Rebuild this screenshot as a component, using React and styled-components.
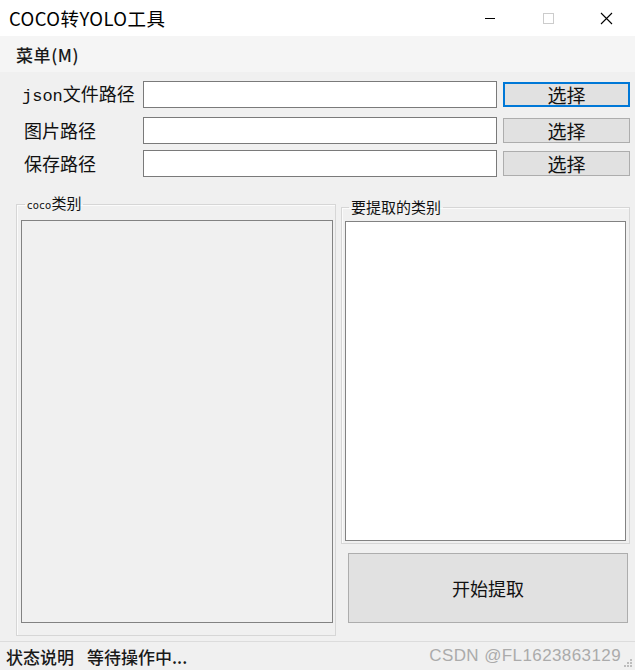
import styled, { createGlobalStyle } from 'styled-components';

const GlobalStyle = createGlobalStyle`
  html, body {
    margin: 0;
    padding: 0;
    background: #f0f0f0;
  }
  * {
    box-sizing: border-box;
  }
`;

const FONT = '"Noto Sans CJK SC", "Noto Sans", sans-serif';

function App() {
  return (
    <Window>
      <GlobalStyle />
      <TitleBar>
        <Title>COCO转YOLO工具</Title>
        <Controls>
          <ControlButton aria-label="minimize">
            <svg width="12" height="12" viewBox="0 0 12 12">
              <line x1="1" y1="6.5" x2="11" y2="6.5" stroke="#000" strokeWidth="1" />
            </svg>
          </ControlButton>
          <ControlButton aria-label="maximize">
            <svg width="12" height="12" viewBox="0 0 12 12">
              <rect x="1.5" y="1.5" width="10" height="10" fill="none" stroke="#cccccc" strokeWidth="1" />
            </svg>
          </ControlButton>
          <ControlButton aria-label="close">
            <svg width="13" height="13" viewBox="0 0 13 13">
              <path d="M1 1 L12 12 M12 1 L1 12" stroke="#000" strokeWidth="1.1" />
            </svg>
          </ControlButton>
        </Controls>
      </TitleBar>

      <MenuBar>
        <MenuItem>菜单(M)</MenuItem>
      </MenuBar>

      <Body>
        <PathRow $top={9}>
          <Label $indent={6}>
            <Mono>json</Mono>文件路径
          </Label>
          <PathInput />
          <PickButton $focused>选择</PickButton>
        </PathRow>
        <PathRow $top={9}>
          <Label $indent={8}>图片路径</Label>
          <PathInput />
          <PickButton>选择</PickButton>
        </PathRow>
        <PathRow $top={6}>
          <Label $indent={8}>保存路径</Label>
          <PathInput />
          <PickButton>选择</PickButton>
        </PathRow>

        <Lower>
          <LeftGroup>
            <Legend>
              <Small>coco</Small>类别
            </Legend>
            <ListBox $height={403} $disabled />
          </LeftGroup>
          <RightColumn>
            <RightGroup>
              <Legend>要提取的类别</Legend>
              <ListBox $height={320} />
            </RightGroup>
            <StartButton>开始提取</StartButton>
          </RightColumn>
        </Lower>
      </Body>

      <StatusBar>
        <StatusLabel>状态说明</StatusLabel>
        <StatusText>等待操作中...</StatusText>
        <Watermark>CSDN @FL1623863129</Watermark>
        <Grip>
          <svg width="10" height="10" viewBox="0 0 10 10">
            {[
              [8, 2],
              [5, 5],
              [8, 5],
              [2, 8],
              [5, 8],
              [8, 8],
            ].map(([x, y]) => (
              <rect key={`${x}-${y}`} x={x - 1} y={y - 1} width="2" height="2" fill="#bdbdbd" />
            ))}
          </svg>
        </Grip>
      </StatusBar>
    </Window>
  );
}

const Window = styled.div`
  width: 635px;
  height: 670px;
  display: flex;
  flex-direction: column;
  background: #f0f0f0;
  font-family: ${FONT};
  color: #000;
  overflow: hidden;
`;

const TitleBar = styled.div`
  height: 36px;
  flex: none;
  display: flex;
  align-items: center;
  justify-content: space-between;
  background: #fff;
  padding-left: 9px;
`;

const Title = styled.div`
  font-size: 18.5px;
  line-height: 36px;
  letter-spacing: 0.4px;
`;

const Controls = styled.div`
  display: flex;
  height: 100%;
`;

const ControlButton = styled.div`
  width: 58px;
  height: 100%;
  display: flex;
  align-items: center;
  justify-content: center;
`;

const MenuBar = styled.div`
  height: 36px;
  flex: none;
  display: flex;
  align-items: center;
  padding-left: 16px;
  background: #f5f5f5;
`;

const MenuItem = styled.span`
  font-size: 17px;
  font-weight: 500;
  letter-spacing: 0.6px;
  color: #1a1a1a;
`;

const Body = styled.div`
  flex: 1;
  display: flex;
  flex-direction: column;
  padding: 0 5px 0 16px;
`;

const PathRow = styled.div`
  display: flex;
  align-items: center;
  height: 27px;
  margin-top: ${(p) => p.$top}px;
`;

const Label = styled.div`
  width: 127px;
  flex: none;
  padding-left: ${(p) => p.$indent}px;
  font-size: 18px;
  line-height: 27px;
  white-space: nowrap;
  color: #111;
`;

const Mono = styled.span`
  font-family: "Liberation Mono", "DejaVu Sans Mono", monospace;
  font-size: 17px;
`;

const PathInput = styled.div`
  width: 354px;
  height: 27px;
  flex: none;
  background: #fff;
  border: 1px solid #7a7a7a;
`;

const PickButton = styled.div`
  width: 127px;
  height: 25px;
  flex: none;
  margin-left: 6px;
  display: flex;
  align-items: center;
  justify-content: center;
  background: #e1e1e1;
  border: ${(p) => (p.$focused ? '2px solid #0078d7' : '1px solid #adadad')};
  font-size: 19px;
  color: #111;
`;

const Lower = styled.div`
  display: flex;
  align-items: flex-start;
  gap: 5px;
`;

const GroupBase = styled.fieldset`
  margin: 0;
  min-width: 0;
  border: 1px solid #d6d6d6;
  box-shadow: inset 1px 1px 0 #fbfbfb;
`;

const LeftGroup = styled(GroupBase)`
  width: 320px;
  flex: none;
  margin-top: 17px;
  padding: 5px 2px 12px 4px;
`;

const RightColumn = styled.div`
  width: 289px;
  flex: none;
  margin-top: 21px;
  display: flex;
  flex-direction: column;
`;

const RightGroup = styled(GroupBase)`
  width: 289px;
  padding: 5px 3px 2px 3px;
`;

const Legend = styled.legend`
  padding: 0 2px;
  margin-left: 4px;
  font-size: 15px;
  line-height: 18px;
  color: #111;
`;

const Small = styled.span`
  font-family: "DejaVu Sans", sans-serif;
  font-size: 10px;
  letter-spacing: 0.3px;
`;

const ListBox = styled.div`
  height: ${(p) => p.$height}px;
  background: ${(p) => (p.$disabled ? '#f0f0f0' : '#fff')};
  border: 1px solid #828282;
`;

const StartButton = styled.div`
  width: 280px;
  height: 70px;
  margin: 9px 0 0 7px;
  display: flex;
  align-items: center;
  justify-content: center;
  background: #e1e1e1;
  border: 1px solid #adadad;
  font-size: 18px;
  color: #111;
`;

const StatusBar = styled.div`
  height: 29px;
  flex: none;
  display: flex;
  align-items: center;
  padding-left: 6px;
  border-top: 1px solid #dcdcdc;
  position: relative;
`;

const StatusLabel = styled.span`
  font-size: 17px;
  font-weight: 500;
  color: #1a1a1a;
`;

const StatusText = styled.span`
  margin-left: 13px;
  font-size: 17px;
  font-weight: 500;
  color: #1a1a1a;
`;

const Watermark = styled.span`
  margin-left: auto;
  margin-right: 14px;
  font-family: "Liberation Sans", Arial, sans-serif;
  font-size: 17px;
  color: #ababab;
  letter-spacing: 0.4px;
`;

const Grip = styled.div`
  position: absolute;
  right: 2px;
  bottom: 2px;
  width: 10px;
  height: 10px;
  display: flex;
`;

export default App;
